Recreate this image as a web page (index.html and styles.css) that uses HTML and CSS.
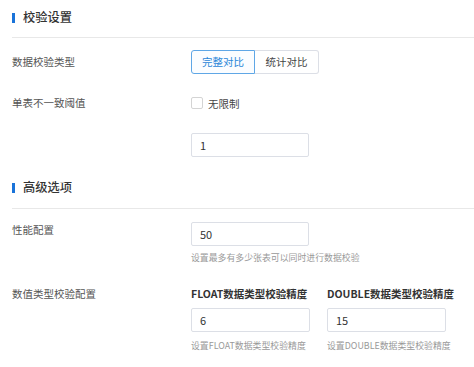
FILE: index.html
```html
<!DOCTYPE html>
<html lang="zh-CN">
<head>
<meta charset="UTF-8">
<meta name="viewport" content="width=device-width, initial-scale=1.0">
<title>校验设置</title>
<link rel="stylesheet" href="styles.css">
</head>
<body>

<div class="page">
    <div class="section-title">校验设置</div>

    <div class="form-row row-center row-type">
        <div class="form-label">数据校验类型</div>
        <div class="btn-group">
            <div class="btn active">完整对比</div>
            <div class="btn">统计对比</div>
        </div>
    </div>

    <div class="form-row row-center row-limit">
        <div class="form-label">单表不一致阈值</div>
        <label class="check">
            <span class="check-box"></span>
            <span class="check-text">无限制</span>
        </label>
    </div>

    <div class="form-row row-threshold">
        <div class="form-label"></div>
        <div class="input">1</div>
    </div>

    <!-- 高级选项 -->
    <div class="section-title section-second">高级选项</div>

    <div class="form-row row-perf">
        <div class="form-label">性能配置</div>
        <div class="field">
            <div class="input">50</div>
            <div class="help">设置最多有多少张表可以同时进行数据校验</div>
        </div>
    </div>

    <div class="form-row row-precision">
        <div class="form-label">数值类型校验配置</div>
        <div class="field-grid">
            <div class="field">
                <div class="field-title">FLOAT数据类型校验精度</div>
                <div class="input">6</div>
                <div class="help">设置FLOAT数据类型校验精度</div>
            </div>
            <div class="field">
                <div class="field-title">DOUBLE数据类型校验精度</div>
                <div class="input">15</div>
                <div class="help">设置DOUBLE数据类型校验精度</div>
            </div>
        </div>
    </div>
</div>

</body>
</html>
```

FILE: styles.css
```css
body {
    margin: 0;
    background: #fff;
    font-family: "Noto Sans CJK SC", "Noto Sans", sans-serif;
    color: #555;
    font-size: 10.5px;
}

.page {
    padding-left: 12px;
}

.section-title {
    position: relative;
    margin-top: 7px;
    padding-left: 11px;
    padding-bottom: 10px;
    border-bottom: 1px solid #e8e8e8;
    font-size: 12.25px;
    line-height: 20px;
    font-weight: 500;
    color: #333;
}

.section-title::before {
    content: '';
    position: absolute;
    left: 0;
    top: 6px;
    width: 3px;
    height: 10px;
    background: #1a73d9;
}

.section-second {
    margin-top: 20px;
    padding-bottom: 11px;
}

.form-row {
    display: flex;
    align-items: flex-start;
}

.row-center {
    align-items: center;
}

.form-label {
    width: 179px;
    flex-shrink: 0;
    line-height: 16px;
    color: #555;
}

.row-type {
    margin-top: 12px;
}

.row-limit {
    margin-top: 19px;
    height: 20px;
}

.row-threshold {
    margin-top: 20px;
}

.row-perf {
    margin-top: 13px;
}

.row-precision {
    margin-top: 19px;
}

.row-precision .form-label {
    line-height: 20px;
}

.btn-group {
    display: flex;
}

.btn {
    width: 64px;
    height: 24px;
    box-sizing: border-box;
    border: 1px solid #dcdfe6;
    line-height: 22px;
    text-align: center;
    color: #444;
}

.btn + .btn {
    border-left: none;
    border-radius: 0 3px 3px 0;
}

.btn.active {
    border-color: #5fa7e6;
    color: #2a86d8;
    background: #fbfdff;
    border-radius: 3px 0 0 3px;
}

.check {
    display: flex;
    align-items: center;
}

.check-box {
    width: 12px;
    height: 12px;
    box-sizing: border-box;
    border: 1px solid #d4d4d4;
    border-radius: 2px;
}

.check-text {
    margin-left: 5px;
    color: #444;
}

.input {
    width: 118px;
    height: 24px;
    box-sizing: border-box;
    border: 1px solid #dcdfe6;
    border-radius: 2px;
    padding-left: 8px;
    font-size: 11px;
    line-height: 22px;
    color: #333;
}

.help {
    margin-top: 5px;
    font-size: 8.9px;
    line-height: 14px;
    color: #999;
}

.field-grid {
    display: grid;
    grid-template-columns: 136px 136px;
}

.field-title {
    font-weight: 700;
    line-height: 20px;
    color: #333;
    margin-bottom: 4px;
}

.field-grid .input {
    width: 119px;
}

.field-grid .help {
    margin-top: 7px;
}
```
